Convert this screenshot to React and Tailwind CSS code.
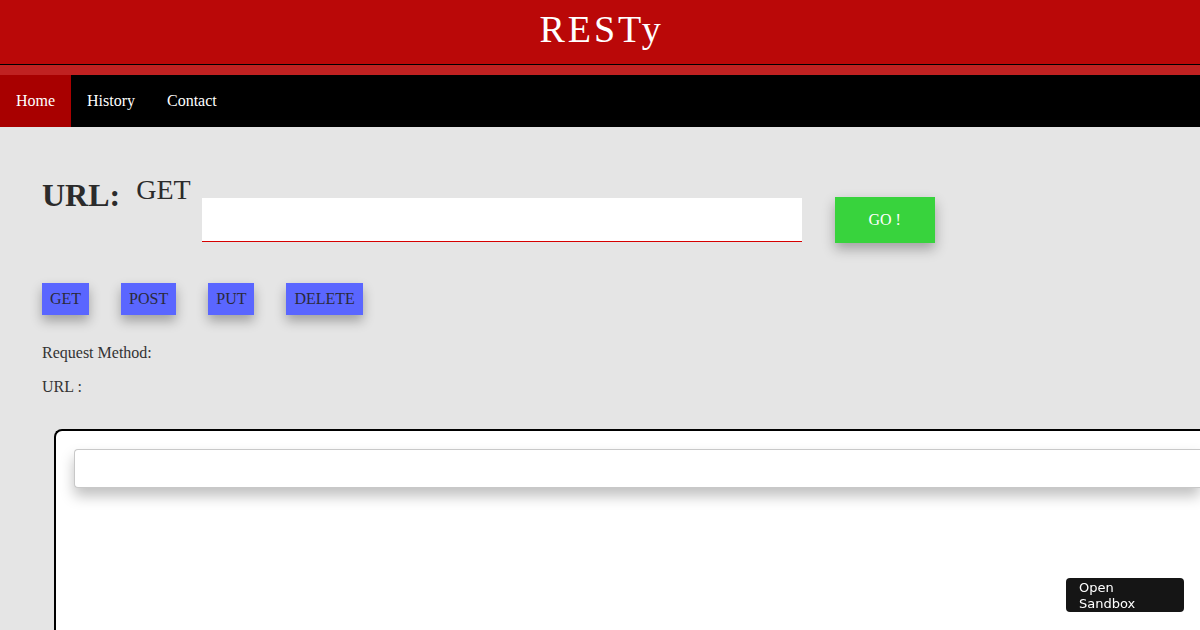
export default function App() {
  const serif = { fontFamily: '"Liberation Serif", "Times New Roman", serif' };
  const title = { fontFamily: '"Liberation Serif", serif' };
  const sans = { fontFamily: '"DejaVu Sans", Verdana, sans-serif' };
  return (
    <div className="h-[630px] bg-[#e5e5e5] overflow-hidden relative" style={serif}>
      <header className="h-[65px] bg-[#ba0808] flex items-center justify-center border-b border-black">
        <h1 className="text-[38px] text-white leading-none font-normal tracking-[3px] pb-[6px] pl-[3px]" style={title}>RESTy</h1>
      </header>
      <div className="h-[10px] bg-[#c02121]" />
      <nav className="h-[52px] bg-black flex text-white text-[16px]">
        <a className="bg-[#a80000] w-[71px] flex items-center justify-center">Home</a>
        <a className="px-4 flex items-center">History</a>
        <a className="px-4 flex items-center">Contact</a>
      </nav>
      <main className="pl-[42px] pt-[49px]">
        <div className="flex items-start">
          <div className="text-[32px] font-bold text-[#2b2b2b] leading-none mt-[3px]">URL:</div>
          <div className="text-[28px] text-[#2b2b2b] leading-none ml-[16px]">GET</div>
          <input className="ml-[11px] mt-[22px] w-[600px] h-[44px] bg-white border-0 border-b border-[#d60000] outline-none" />
          <button className="ml-[33px] mt-[21px] w-[100px] h-[46px] bg-[#38d33d] text-white text-[16px] shadow-[0_6px_12px_rgba(0,0,0,0.3)]">GO !</button>
        </div>
        <div className="flex gap-[32px] mt-[40px]">
          {["GET", "POST", "PUT", "DELETE"].map((m) => (
            <button key={m} className="h-[32px] px-[8px] bg-[#5a66ff] text-[#2a2a3a] text-[16px] shadow-[0_6px_12px_rgba(0,0,0,0.3)]">{m}</button>
          ))}
        </div>
        <p className="mt-[26px] text-[16px] text-[#333]">Request Method:</p>
        <p className="mt-[10px] text-[16px] text-[#333]">URL :</p>
        <div className="ml-[12px] mt-[30px] h-[300px] bg-white border-2 border-black rounded-tl-[8px] border-r-0 pl-[18px] pt-[18px]">
          <div className="h-[39px] bg-white border border-[#c8c8c8] border-r-0 rounded-l-[4px] shadow-[0_8px_14px_rgba(0,0,0,0.25)]" />
        </div>
      </main>
      <div className="fixed right-[16px] top-[578px] w-[118px] h-[34px] bg-[#151515] rounded-[4px] text-white text-[13px] leading-[16px] pl-[13px] pt-[2px]" style={sans}>
        <div className="w-[72px]">Open Sandbox</div>
      </div>
    </div>
  );
}
